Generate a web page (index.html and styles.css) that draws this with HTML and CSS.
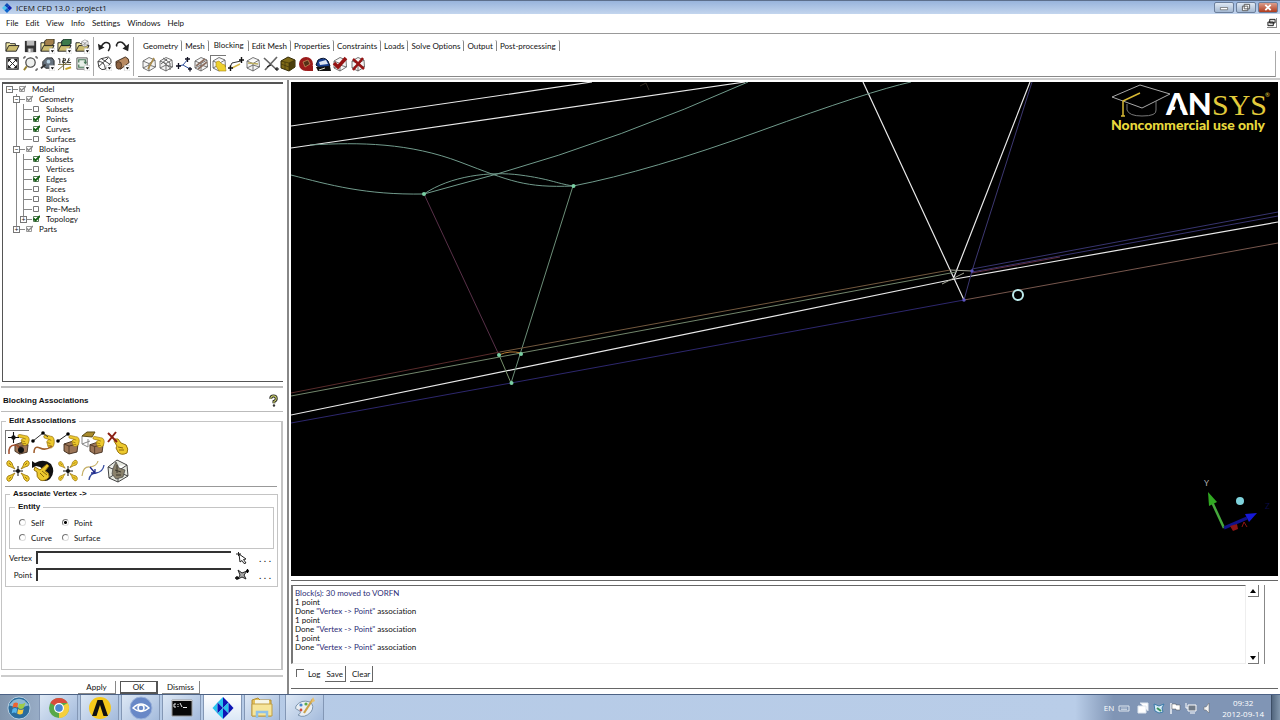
FILE: index.html
```
<!DOCTYPE html>
<html lang="en">
<head>
    <meta charset="UTF-8">
    <meta name="viewport" content="width=device-width, initial-scale=1.0">
    <title>ICEM CFD 13.0 : project1</title>
    <link rel="stylesheet" href="styles.css">
</head>
<body>
    <!-- shared shapes -->
    <svg class="defs" aria-hidden="true">
        <symbol id="wirecube" viewBox="0 0 16 16">
            <path d="M2 5L8 1.500 14 4 14.500 11 8 15 2 12ZM2 5L8 7.500 14 4M8 7.500V15M2 12L8 9 14.500 11" fill="#f4f4f4" stroke="#555" stroke-width=".8"/>
        </symbol>
        <symbol id="folder" viewBox="0 0 16 16">
            <path d="M1 13V4H5L6 5H11V7" fill="#f3eaa5" stroke="#222"/>
            <path d="M1 13L4 7H15L12 13Z" fill="#cdbd70" stroke="#222"/>
        </symbol>
        <symbol id="drop" viewBox="0 0 16 16">
            <path d="M10 10H16V16H10Z" fill="#fff" stroke="#bbb" stroke-width=".5"/>
            <path d="M11.500 12H15L13.200 14.500Z" fill="#000"/>
        </symbol>
        <symbol id="hand" viewBox="0 0 16 16" preserveAspectRatio="none">
            <path d="M1 3Q2 1 5 2L10 3Q15 3 15 8Q15 13 11 14Q7 15 6 11L5 8 8 6 3 5Q1 5 1 3Z" fill="#edc92d" stroke="#97720d" stroke-width=".8"/>
            <path d="M8 6L11 7M6 9L10 10M7 12L11 12" fill="none" stroke="#8a680c" stroke-width=".8"/>
        </symbol>
        <symbol id="solid" viewBox="0 0 16 16">
            <path d="M1 5L10 2 15 5 14 13 6 15 1 12Z" fill="#9c7658" stroke="#3b2819" stroke-width=".9"/>
            <path d="M1 5L6 7 15 5M6 7V15" fill="none" stroke="#4b3423" stroke-width=".9"/>
        </symbol>
        <symbol id="finger" viewBox="0 0 10 10">
            <path d="M1 2Q2 0 4 1L6 3 7 6 9 9 5 7 2 6Q0 4 1 2Z" fill="#edc92d" stroke="#97720d" stroke-width=".8"/>
            <path d="M3 3L5 5" stroke="#8a680c" stroke-width=".8"/>
        </symbol>
        <symbol id="star" viewBox="0 0 10 10">
            <path d="M5 0V10M0 5H10" stroke="#111" stroke-width="1"/><circle cx="5" cy="5" r="2" fill="#111"/>
        </symbol>
    </svg>

    <header class="titlebar">
        <svg class="app-icon" viewBox="0 0 16 16"><path d="M8 0L12 4 8 8 4 4Z" fill="#0b49b5"/><path d="M4 4L8 8 4 12 0 8Z" fill="#4cc4ef"/><path d="M12 4L16 8 12 12 8 8Z" fill="#1020b0"/><path d="M8 8L12 12 8 16 4 12Z" fill="#0d64cb"/></svg>
        <span class="title">ICEM CFD 13.0 : project1</span>
        <div class="window-buttons">
            <button aria-label="Minimize"><svg viewBox="0 0 20 10"><path d="M6 5H14V7.500H6Z" fill="#fff" stroke="#555" stroke-width=".7"/></svg></button>
            <button aria-label="Restore"><svg viewBox="0 0 20 10"><path d="M8 1.500H14V6.500H8ZM6 3.500H12V8.500H6Z" fill="#fff" stroke="#555"/></svg></button>
            <button class="close" aria-label="Close"><svg viewBox="0 0 20 10"><path d="M7 2L13 8M13 2L7 8" stroke="#fff" stroke-width="2"/></svg></button>
        </div>
    </header>

    <nav class="menubar">
        <button>File</button><button>Edit</button><button>View</button><button>Info</button><button>Settings</button><button>Windows</button><button>Help</button>
        <button class="undock" aria-label="Restore child window"><svg viewBox="0 0 10 10"><path d="M3 1.500H9V5.500H3ZM1 4.500H7V8.500H1Z" fill="#ddd" stroke="#111"/></svg></button>
    </nav>

    <section class="toolbar">
        <div class="tools file-tools">
            <button aria-label="Open project"><svg viewBox="0 0 16 16"><use href="#folder"/></svg></button>
            <button aria-label="Save project"><svg viewBox="0 0 16 16"><path d="M2 2H14V14H2Z" fill="#333"/><path d="M4 2H12V7H4Z" fill="#bbb"/><path d="M5 10H11V14H5Z" fill="#999"/><path d="M6 10.500H8V14H6Z" fill="#eee"/></svg></button>
            <button aria-label="Open geometry"><svg viewBox="0 0 16 16"><use href="#folder"/><path d="M5 2L8 0H15V5L12 7H5Z" fill="#a3804c" stroke="#332"/><use href="#drop"/></svg></button>
            <button aria-label="Open mesh"><svg viewBox="0 0 16 16"><use href="#folder"/><path d="M5 2L8 0H15V5L12 7H5Z" fill="#3d7a4b" stroke="#122"/><use href="#drop"/></svg></button>
            <button aria-label="Open blocking"><svg viewBox="0 0 16 16"><use href="#folder"/><use href="#wirecube" x="6" y="0" width="9" height="9"/><use href="#drop"/></svg></button>
            <button aria-label="Fit window"><svg viewBox="0 0 16 16"><path d="M2 2H14V14H2Z" fill="#fff" stroke="#222" stroke-width="1.300"/><path d="M4 4L12 12M12 4L4 12" stroke="#222"/><path d="M3 3H7L3 7ZM13 3V7L9 3ZM3 13V9L7 13ZM13 13H9L13 9Z" fill="#222"/></svg></button>
            <button aria-label="Box zoom"><svg viewBox="0 0 16 16"><circle cx="8" cy="7" r="5" fill="#eef0ee" stroke="#444" stroke-width="1.300"/><path d="M4 11L1 15" stroke="#96802e" stroke-width="2"/><path d="M1 1H3M1 1V3M15 1H13M15 1V3M15 15H13M15 15V13" stroke="#222"/></svg></button>
            <button aria-label="Measure"><svg viewBox="0 0 16 16"><path d="M3 6L7 2H13L15 5V13H6L3 10Z" fill="#66727e" stroke="#222"/><path d="M1 13L6 9" stroke="#333" stroke-width="2"/><circle cx="9" cy="6" r="2" fill="#b8d2e2"/><use href="#drop"/></svg></button>
            <button aria-label="Local coordinate system"><svg viewBox="0 0 16 16"><path d="M1 15L14 4M7 2V15M1 9H15" stroke="#716538"/><path d="M1 3H3V8M6 3H9V5H6V7H9M13 2L11 7H15" stroke="#222" fill="none"/><path d="M9 14L15 12" stroke="#c9a323" stroke-width="2"/></svg></button>
            <button aria-label="Refresh"><svg viewBox="0 0 16 16"><path d="M2 2H13V14H2Z" fill="#e8efe8" stroke="#555"/><path d="M4 7V4H11V7M4 9V12H10" fill="none" stroke="#477858" stroke-width="1.300"/><path d="M9 6H13L11 9Z" fill="#477858"/><use href="#drop"/></svg></button>
        </div>
        <div class="tools edit-tools">
            <button aria-label="Undo"><svg viewBox="0 0 16 16"><path d="M4 9Q8 1 13 5Q15 8 12 13" fill="none" stroke="#222" stroke-width="1.600"/><path d="M1 5L2 12 8 9Z" fill="#222"/></svg></button>
            <button aria-label="Redo"><svg viewBox="0 0 16 16"><path d="M12 9Q8 1 3 4Q1 6 2 8" fill="none" stroke="#222" stroke-width="1.600"/><path d="M15 5L14 13 8 10Z" fill="#222"/></svg></button>
            <button aria-label="Wire frame"><svg viewBox="0 0 16 16"><path d="M1 6Q3 2 8 2L12 1Q16 3 15 7L9 14Q5 16 2 12ZM1 6Q8 5 9 14M5 3L14 9M2 11L12 2" fill="#fff" stroke="#333"/><use href="#drop"/></svg></button>
            <button aria-label="Solid"><svg viewBox="0 0 16 16"><path d="M1 6L11 1Q15 2 15 7L6 14Q1 13 1 6Z" fill="#b98b62" stroke="#3b2819"/><ellipse cx="4" cy="10" rx="3" ry="4" fill="#8d6241" stroke="#3b2819" stroke-width=".8"/><use href="#drop"/></svg></button>
        </div>
        <div class="ribbon">
            <div class="tabs" role="tablist">
                <button role="tab">Geometry</button><button role="tab">Mesh</button><button role="tab" class="active" aria-selected="true">Blocking</button><button role="tab">Edit Mesh</button><button role="tab">Properties</button><button role="tab">Constraints</button><button role="tab">Loads</button><button role="tab">Solve Options</button><button role="tab">Output</button><button role="tab">Post-processing</button>
            </div>
            <div class="ribbon-page">
                <div class="block-tools">
                    <button aria-label="Create block"><svg viewBox="0 0 16 16"><use href="#wirecube"/><path d="M7 13L13 2" stroke="#a98b4b" stroke-width="1.600"/></svg></button>
                    <button aria-label="Split block"><svg viewBox="0 0 16 16"><use href="#wirecube"/><path d="M5 2L12 7V14M5 6L11 11M3 8L9 3" fill="none" stroke="#666"/></svg></button>
                    <button aria-label="Merge vertices"><svg viewBox="0 0 16 16"><path d="M2 10L7 9 12 3M7 9L14 13" fill="none" stroke="#2b4d9b"/><path d="M0 10H5M2.500 7V13M9 3H14M11.500 1V6M12 13H16M14 11V15.500" stroke="#112"  stroke-width="1.300"/></svg></button>
                    <button aria-label="Edit block"><svg viewBox="0 0 16 16"><use href="#wirecube"/><path d="M3 10L12 3M5 13L14 6" stroke="#8a6f61" stroke-width="1.600"/></svg></button>
                    <button class="pressed" aria-label="Associate" aria-pressed="true"><svg viewBox="0 0 16 16"><use href="#wirecube"/><path d="M5 6L8 5 11 8 14 9 15 15H8L5 10Z" fill="#edd02d" stroke="#a98612" stroke-width=".6"/></svg></button>
                    <button aria-label="Move vertex"><svg viewBox="0 0 16 16"><path d="M2 11L4 7 13 5" fill="none" stroke="#333"/><path d="M4 12L12 8" stroke="#d6b847" stroke-width="1.500"/><path d="M0 12H5M2.500 9.500V15M11 4H16M13.500 1V7" stroke="#111" stroke-width="1.400"/></svg></button>
                    <button aria-label="Transform blocks"><svg viewBox="0 0 16 16"><use href="#wirecube"/><path d="M3 7L13 8" stroke="#bcae61" stroke-width="1.500"/></svg></button>
                    <button aria-label="Edit edge"><svg viewBox="0 0 16 16"><path d="M1 2L14 14M14 1L2 14" stroke="#666" stroke-width="1.700"/><path d="M4 11L8 9M12 13H16M14 11V15" stroke="#111"/></svg></button>
                    <button aria-label="Pre-mesh parameters"><svg viewBox="0 0 16 16"><path d="M1 5L8 1 15 4V11L9 15 1 12Z" fill="#7e6917" stroke="#322b08"/><path d="M9 7L15 4V11L9 15Z" fill="#4b3e0c"/><path d="M1 5L9 7 15 4M9 7V15M1 8L9 11M5 6V13" fill="none" stroke="#352c06" stroke-width=".6"/></svg></button>
                    <button aria-label="Pre-mesh quality"><svg viewBox="0 0 16 16"><circle cx="8" cy="8" r="7" fill="#9b1b1b"/><path d="M10 10H15V15H9Z" fill="#9b1b1b"/><path d="M5 6L10 4 12 8 7 11Z" fill="#553017" stroke="#c28c58" stroke-width=".8"/></svg></button>
                    <button aria-label="Smooth mesh"><svg viewBox="0 0 16 16"><path d="M1 9L3 4Q9 0 13 5L15 10 5 12Z" fill="#173d8c" stroke="#08142c"/><path d="M4 6L11 4 13 8 5 9Z" fill="#dbe4f2"/><path d="M1 11L15 10 16 15H3Z" fill="#111"/><path d="M4 14L10 12" stroke="#ddc" /></svg></button>
                    <button aria-label="Check blocks"><svg viewBox="0 0 16 16"><use href="#wirecube"/><path d="M2 7L6 11 14 2" fill="none" stroke="#951313" stroke-width="3.500"/></svg></button>
                    <button aria-label="Delete blocks"><svg viewBox="0 0 16 16"><use href="#wirecube"/><path d="M3 3L14 13M13 2L3 14" stroke="#951313" stroke-width="2.500"/></svg></button>
                </div>
            </div>
        </div>
    </section>

    <main class="workspace">
        <aside class="sidebar">
            <ul class="tree">
                <li>
                    <div class="row"><button class="twist" aria-label="Collapse">−</button><label><input type="checkbox" class="partial" checked>Model</label></div>
                    <ul>
                        <li>
                            <div class="row"><button class="twist" aria-label="Collapse">−</button><label><input type="checkbox" class="partial" checked>Geometry</label></div>
                            <ul>
                                <li><div class="row"><label><input type="checkbox">Subsets</label></div></li>
                                <li><div class="row"><label><input type="checkbox" checked>Points</label></div></li>
                                <li><div class="row"><label><input type="checkbox" checked>Curves</label></div></li>
                                <li><div class="row"><label><input type="checkbox">Surfaces</label></div></li>
                            </ul>
                        </li>
                        <li>
                            <div class="row"><button class="twist" aria-label="Collapse">−</button><label><input type="checkbox" class="partial" checked>Blocking</label></div>
                            <ul>
                                <li><div class="row"><label><input type="checkbox" checked>Subsets</label></div></li>
                                <li><div class="row"><label><input type="checkbox">Vertices</label></div></li>
                                <li><div class="row"><label><input type="checkbox" checked>Edges</label></div></li>
                                <li><div class="row"><label><input type="checkbox">Faces</label></div></li>
                                <li><div class="row"><label><input type="checkbox">Blocks</label></div></li>
                                <li><div class="row"><label><input type="checkbox">Pre-Mesh</label></div></li>
                                <li><div class="row"><button class="twist" aria-label="Expand">+</button><label><input type="checkbox" checked>Topology</label></div></li>
                            </ul>
                        </li>
                        <li><div class="row"><button class="twist" aria-label="Expand">+</button><label><input type="checkbox" class="partial" checked>Parts</label></div></li>
                    </ul>
                </li>
            </ul>

            <div class="panel-title">
                <h2>Blocking Associations</h2>
                <button aria-label="Help"><svg viewBox="0 0 12 14"><path d="M3 5Q3 2 6 2Q9 2 9 5Q9 7 6.500 8V10" fill="none" stroke="#222" stroke-width="3.200"/><path d="M3 5Q3 2 6 2Q9 2 9 5Q9 7 6.500 8V10" fill="none" stroke="#cbd06a" stroke-width="1.200"/><circle cx="6.500" cy="12.500" r="1.300" fill="#333"/></svg></button>
            </div>

            <fieldset class="panel">
                <legend>Edit Associations</legend>
                <div class="assoc-tools">
                    <button class="pressed" aria-label="Associate vertex" aria-pressed="true"><svg viewBox="0 0 24 24"><use href="#solid" x="8" y="9" width="15" height="15"/><use href="#hand" x="11" y="2" width="13" height="14"/><use href="#star" x="2" y="1" width="11" height="11"/><path d="M3 23Q2 14 9 14Q13 14 14 20" fill="none" stroke="#a3502f" stroke-width="1.500"/><circle cx="15" cy="19" r="3" fill="#111"/></svg></button>
                    <button aria-label="Associate edge to curve"><svg viewBox="0 0 24 24"><use href="#hand" x="12" y="2" width="12" height="17"/><path d="M2 10L12 2 17 6" fill="none" stroke="#333"/><path d="M3 22Q3 14 9 17T21 15" fill="none" stroke="#a1602f" stroke-width="1.500"/><circle cx="2" cy="10" r="1.800"/><circle cx="12" cy="2" r="1.800"/></svg></button>
                    <button aria-label="Associate edge to surface"><svg viewBox="0 0 24 24"><use href="#solid" x="7" y="8" width="16" height="16"/><use href="#hand" x="12" y="3" width="12" height="14"/><path d="M2 10L12 3" stroke="#222"/><circle cx="2" cy="10" r="1.800"/><circle cx="12" cy="3" r="1.800"/></svg></button>
                    <button aria-label="Associate face to surface"><svg viewBox="0 0 24 24"><path d="M1 5V13L7 16V8M1 13L9 10" fill="none" stroke="#888"/><use href="#solid" x="8" y="9" width="15" height="15"/><use href="#hand" x="11" y="4" width="13" height="14"/><path d="M1 5L6 1H14L11 6Z" fill="#a88a2b" stroke="#5b4b16"/></svg></button>
                    <button aria-label="Disassociate"><svg viewBox="0 0 24 24"><path d="M9 8L12 8 15 12 20 14Q23 18 21 22Q15 25 12 21L10 17 11 15 8 10Z" fill="#edc92d" stroke="#97720d"/><path d="M12 16L17 17M13 19L18 19" stroke="#8a680c"/><path d="M2 2L11 11M10 1L2 11" stroke="#8a1f14" stroke-width="2"/></svg></button>
                    <button aria-label="Update associations"><svg viewBox="0 0 24 24"><use href="#finger" x="0" y="1" width="10" height="10"/><use href="#finger" x="0" y="1" width="10" height="10" transform="matrix(-1 0 0 1 24 0)"/><use href="#finger" x="0" y="1" width="10" height="10" transform="matrix(1 0 0 -1 0 24)"/><use href="#finger" x="0" y="1" width="10" height="10" transform="matrix(-1 0 0 -1 24 24)"/><use href="#star" x="7" y="7" width="10" height="10"/></svg></button>
                    <button aria-label="Reset association"><svg viewBox="0 0 24 24"><path d="M1 9V2L4 4Q13 -1 20 5Q25 13 19 20Q14 24 9 20L17 14 9 8 5 7Z" fill="#111"/><path d="M4 8L9 11 16 5 18 7 14 12Q19 14 18 18Q14 23 9 21Q5 18 6 13L3 11Z" fill="#edc92d" stroke="#97720d"/><path d="M9 14L13 18M11 12L16 16" stroke="#8a680c"/></svg></button>
                    <button aria-label="Snap project vertices"><svg viewBox="0 0 24 24"><use href="#finger" x="2" y="1" width="8" height="10"/><use href="#finger" x="2" y="0" width="9" height="10" transform="matrix(-1 0 0 1 24 0)"/><use href="#finger" x="2" y="1" width="8" height="10" transform="matrix(1 0 0 -1 0 24)"/><use href="#finger" x="2" y="1" width="9" height="10" transform="matrix(-1 0 0 -1 24 24)"/><use href="#star" x="7" y="7" width="10" height="10"/></svg></button>
                    <button aria-label="Group curves"><svg viewBox="0 0 24 24"><path d="M1 17Q2 7 9 8Q16 7 17 2" fill="none" stroke="#c5af65" stroke-width="1.200"/><path d="M8 21Q9 14 15 14Q22 13 23 6" fill="none" stroke="#354ca0" stroke-width="1.300"/><path d="M9 8L14 14M14 10V14H10" fill="none" stroke="#202a8c" stroke-width="1.300"/></svg></button>
                    <button aria-label="Auto associate"><svg viewBox="0 0 24 24"><path d="M2 8L11 1 21 6 22 17 12 23 3 19ZM2 8L12 12 21 6M12 12V23M3 19L12 13 22 17" fill="#e6e9e0" stroke="#444"/><path d="M7 9L10 3 13 9 19 11 17 18 10 20 6 15Z" fill="#89816b" stroke="#444" stroke-width=".7"/><path d="M9 11L15 13M10 16L15 16M11 6V14" stroke="#3a372d"/></svg></button>
                </div>

                <fieldset class="group">
                    <legend>Associate Vertex -&gt;</legend>
                    <fieldset class="entity">
                        <legend>Entity</legend>
                        <label><input type="radio" name="entity">Self</label>
                        <label><input type="radio" name="entity" checked>Point</label>
                        <label><input type="radio" name="entity">Curve</label>
                        <label><input type="radio" name="entity">Surface</label>
                    </fieldset>
                    <div class="field">
                        <label for="vertex">Vertex</label>
                        <input type="text" id="vertex">
                        <button aria-label="Select vertex"><svg viewBox="0 0 14 12"><path d="M4 2L11 7 8.500 7.500 11 11 9 11.500 7 8.500 5 10Z" fill="#fff" stroke="#222"/><path d="M1 2H6M3.500 0V4" stroke="#222"/></svg></button>
                        <button class="more">. . .</button>
                    </div>
                    <div class="field">
                        <label for="point">Point</label>
                        <input type="text" id="point">
                        <button aria-label="Select point"><svg viewBox="0 0 14 12"><path d="M3 1L7 4 12 2 9 6 11 10 7 8 3 10 5 6Z" fill="#aaa" stroke="#222"/><path d="M0 9H4M2 7V11M11 2H14M12.500 0V4" stroke="#000" stroke-width="1.300"/></svg></button>
                        <button class="more">. . .</button>
                    </div>
                </fieldset>
            </fieldset>

            <div class="actions">
                <button>Apply</button><button class="default">OK</button><button>Dismiss</button>
            </div>
        </aside>

        <section class="content">
            <svg class="viewport" viewBox="291 82 987 494" preserveAspectRatio="xMinYMin slice">
                <!-- edges -->
                <g fill="none" stroke="#e9e9e9" stroke-width="1.200">
                    <path d="M291 126L592 82M291 148L745 82"/>
                    <path d="M291 415L955 279L1278 222"/>
                    <path d="M863 82L964 300M1030 82L954 277"/>
                </g>
                <!-- curves -->
                <g fill="none" stroke="#719b8c">
                    <path d="M291 175C330 185 365 195 424 194C450 176 490 171 520 175S555 183 573 186"/>
                    <path d="M310 145C360 142 410 143 460 162S525 188 573 186"/>
                    <path d="M424 194L497 174Q620 139 748 82"/>
                    <path d="M573 186Q650 171 760 131T911 82"/>
                    <path d="M573 186L511 383" stroke="#6c8e78"/>
                </g>
                <g fill="none">
                    <path d="M424 194L499 355" stroke="#583048"/>
                    <path d="M499 355L511 383" stroke="#77916c"/>
                    <path d="M291 393L500 352" stroke="#592b2b"/>
                    <path d="M500 352L950 270" stroke="#72583e"/>
                    <path d="M291 396L521 353L956 272" stroke="#72866c"/>
                    <path d="M499 355Q510 350 521 353" stroke="#b87d36"/>
                    <path d="M291 423L511 383L964 300" stroke="#2d276d"/>
                    <path d="M964 300L1278 243" stroke="#77574d"/>
                    <path d="M972 269L1278 212M972 272L1278 216" stroke="#37346f"/>
                    <path d="M972 273L1060 257" stroke="#613046"/>
                    <path d="M1032 82L972 271L964 300" stroke="#3d3872"/>
                    <path d="M942 284L964 273M950 270L972 271" stroke="#a4a798"/>
                    <path d="M640 86L646 83L649 90" stroke="#332b21"/>
                </g>
                <g fill="#79cfa3">
                    <circle cx="424" cy="194" r="2"/><circle cx="573.500" cy="186" r="2"/><circle cx="499" cy="355" r="2"/><circle cx="521" cy="354" r="2"/><circle cx="511.500" cy="383" r="2"/>
                </g>
                <circle cx="972" cy="271" r="1.700" fill="#5d55c2"/><circle cx="964" cy="300" r="1.700" fill="#5d55c2"/>
                <circle cx="1018" cy="295" r="5" fill="none" stroke="#bdebec" stroke-width="2"/>

                <!-- ANSYS logo -->
                <g fill="none">
                    <path d="M1112 97L1140 85L1170 94L1142 108Z" stroke="#a9a9a9"/>
                    <path d="M1127 104V110Q1129 116 1142 116Q1157 116 1156 110V101" stroke="#777"/>
                    <path d="M1140 93L1123 101V116M1121 116H1125" stroke="#d8b934" stroke-width="1.500"/>
                </g>
                <text class="logo-an" x="1166" y="115">AN</text>
                <path d="M1173 116L1177.500 99L1182.500 116Z" fill="#000"/>
                <text class="logo-sys" x="1212" y="115">SYS</text>
                <text class="logo-r" x="1265" y="97">®</text>
                <text class="logo-note" x="1265" y="130">Noncommercial use only</text>

                <!-- axis triad -->
                <path d="M1224 528L1212 502" stroke="#46a83c" stroke-width="2.500"/>
                <path d="M1208 492L1217 502L1209 506Z" fill="#31a922"/>
                <path d="M1224 528L1247 518" stroke="#11118a" stroke-width="3"/>
                <path d="M1257 513L1249 522L1245 514Z" fill="#1619d8"/>
                <path d="M1230 526L1237 524L1238 529L1233 531Z" fill="#8d1515"/>
                <path d="M1242 527L1244 522L1247 527" stroke="#8d1515" fill="none"/>
                <circle cx="1240" cy="501" r="4" fill="#7fd3dc"/>
                <text class="axis" x="1204" y="486">Y</text>
                <text class="axis axis-z" x="1265" y="509">Z</text>
            </svg>

            <div class="console">
                <div class="log-area">
                    <div class="messages" role="log">
                        <p><em>Block(s): 30 moved to VORFN</em></p>
                        <p>1 point</p>
                        <p>Done <em>"Vertex -&gt; Point"</em> association</p>
                        <p>1 point</p>
                        <p>Done <em>"Vertex -&gt; Point"</em> association</p>
                        <p>1 point</p>
                        <p>Done <em>"Vertex -&gt; Point"</em> association</p>
                    </div>
                    <div class="scroller">
                        <button aria-label="Scroll up"><svg viewBox="0 0 6 4"><path d="M0 4L3 0 6 4Z"/></svg></button>
                        <button aria-label="Scroll down"><svg viewBox="0 0 6 4"><path d="M0 0L3 4 6 0Z"/></svg></button>
                    </div>
                </div>
                <div class="log-controls">
                    <label><input type="checkbox">Log</label>
                    <button>Save</button>
                    <button>Clear</button>
                </div>
            </div>
        </section>
    </main>

    <footer class="taskbar">
        <button class="start" aria-label="Start"><svg viewBox="0 0 26 26"><circle cx="13" cy="13" r="12" fill="#2a6c9d" stroke="#bfd6e6"/><path d="M2 10Q13 -4 24 10Q13 14 2 10Z" fill="#8eb9d4"/><path d="M7 8Q10 6 12 8L11 13Q9 11 6 13Z" fill="#ee6430"/><path d="M13 8Q16 10 20 7L18 13Q15 15 12 13Z" fill="#9dcc47"/><path d="M6 14Q9 12 11 14L10 19Q8 17 5 19Z" fill="#55b4ec"/><path d="M12 14Q15 16 18 14L17 19Q14 21 11 19Z" fill="#f9cb3e"/></svg></button>
        <button class="task" aria-label="Chrome"><svg viewBox="0 0 24 24"><circle cx="12" cy="12" r="10" fill="#58a849"/><path d="M12 12L3.300 7A10 10 0 0 1 20.700 7H12Z" fill="#d94b3c"/><path d="M12 12L20.700 7A10 10 0 0 1 12 22Z" fill="#f5cf3c"/><circle cx="12" cy="12" r="5" fill="#fff"/><circle cx="12" cy="12" r="3.800" fill="#4a86d0"/></svg></button>
        <button class="task" aria-label="ANSYS Workbench"><svg viewBox="0 0 24 24"><circle cx="12" cy="12" r="11" fill="#f6c91b"/><path d="M4 20L9.500 4H14.500L20 20H15.500L12 9 8.500 20Z" fill="#111"/></svg></button>
        <button class="task" aria-label="Viewer"><svg viewBox="0 0 24 24"><circle cx="12" cy="12" r="11" fill="#6888c7" stroke="#9bb2da"/><path d="M4 12Q12 4 20 12Q12 19 4 12Z" fill="none" stroke="#fff" stroke-width="1.400"/><circle cx="12" cy="12" r="3" fill="none" stroke="#fff" stroke-width="1.500"/></svg></button>
        <button class="task" aria-label="Command prompt"><svg viewBox="0 0 24 24"><path d="M2 4H22V20H2Z" fill="#080808" stroke="#9a9a9a"/><path d="M2 4.500H22" stroke="#ccc"/><path d="M6 8H4V11H6M8 8V9M8 10V11M10 7L12 11M13 11.500H17" stroke="#eee" fill="none"/></svg></button>
        <button class="task current" aria-label="ICEM CFD"><svg viewBox="0 0 24 24"><path d="M12 1L6.500 6.500 12 12Z" fill="#27c3ee"/><path d="M12 1L17.500 6.500 12 12Z" fill="#0d14b4"/><path d="M6.500 6.500L1.500 12 6.500 17.500Z" fill="#27c3ee"/><path d="M6.500 6.500L12 12 6.500 17.500Z" fill="#0d14b4"/><path d="M17.500 6.500L12 12 17.500 17.500Z" fill="#27c3ee"/><path d="M17.500 6.500L22.500 12 17.500 17.500Z" fill="#0d14b4"/><path d="M12 12V23L6.500 17.500Z" fill="#27c3ee"/><path d="M12 12L17.500 17.500 12 23Z" fill="#0d14b4"/></svg></button>
        <button class="task folder" aria-label="Explorer"><svg viewBox="0 0 24 24"><path d="M2 4L8 2 10 4H21V20H2Z" fill="#e5c15b" stroke="#b08d34"/><path d="M5 4H19V10H5Z" fill="#f6f6e8"/><path d="M2 8H22V20H2Z" fill="#f6e59a" stroke="#bf9d44"/><path d="M7 22V16H17V22" fill="none" stroke="#8fc1e8" stroke-width="2.500"/></svg></button>
        <button class="task" aria-label="Paint"><svg viewBox="0 0 24 24"><path d="M3 10Q8 3 17 6Q22 10 18 16Q11 23 5 19Q10 16 5 14Q1 13 3 10Z" fill="#e9eef3" stroke="#7d95ae"/><circle cx="8" cy="9" r="1.600" fill="#4a86d0"/><circle cx="13" cy="8" r="1.600" fill="#5aa94a"/><circle cx="8" cy="14" r="1.400" fill="#d04a3c"/><path d="M20 3L11 17" stroke="#cda34b" stroke-width="2.200"/><path d="M20 1L22 5 18 7Z" fill="#e7c06b"/></svg></button>
        <div class="tray">
            <span>EN</span>
            <svg viewBox="0 0 12 12"><path d="M1 4H11V9H1Z" fill="none" stroke="#dfe6ee"/><path d="M3 6H9M3 7.500H9" stroke="#dfe6ee" stroke-width=".7"/></svg>
            <svg class="first" viewBox="0 0 12 12"><path d="M1 4H9V11H1ZM3 1H11V9" fill="#fff" stroke="#dfe6ee"/></svg>
            <svg viewBox="0 0 12 12"><path d="M1 2L6 4 11 2 9 6 10 10 6 11 2 9Z" fill="#d7edf7" stroke="#3c7bab"/><path d="M4 6L8 9" stroke="#3e9258" stroke-width="2"/></svg>
            <svg viewBox="0 0 12 12"><path d="M2 1V12" stroke="#fff" stroke-width="1.300"/><path d="M3 2H7V3H11V8H7V7H3Z" fill="#fff" stroke="#555" stroke-width=".5"/></svg>
            <svg viewBox="0 0 12 12"><path d="M3 3H11V9H3Z" fill="#707b88" stroke="#fff"/><path d="M5 11H10M1 1V6H3" stroke="#fff" fill="none"/></svg>
            <svg viewBox="0 0 12 12"><path d="M3 5H5L8 1V11L5 8H3Z" fill="#f2f2f2" stroke="#666" stroke-width=".5"/></svg>
            <time class="clock" datetime="2012-09-14T09:32">09:32<br>2012-09-14</time>
            <button class="peek" aria-label="Show desktop"></button>
        </div>
    </footer>
</body>
</html>
```
FILE: styles.css
```
* {
    box-sizing: border-box;
}

body {
    margin: 0;
    height: 100vh;
    display: flex;
    flex-direction: column;
    overflow: hidden;
    background: #fff;
    color: #111;
    font-family: Lato, "Liberation Sans", Arial, sans-serif;
    font-size: 8px;
    font-variant-ligatures: none;
    line-height: 10px;
}

button {
    padding: 0;
    border: 0;
    background: none;
    color: inherit;
    font: inherit;
    font-variant-ligatures: none;
}

button svg {
    display: block;
}

.defs {
    display: none;
}

/* Title bar and menu */
.titlebar {
    display: flex;
    align-items: center;
    flex: none;
    height: 14px;
    padding: 0 2px;
    border-top: 1px solid #5d6f8c;
    background: linear-gradient(#98b4dc, #c3d5ee);
}

.app-icon {
    width: 10px;
    height: 12px;
}

.title {
    margin-left: 4px;
    font-family: "Open Sans", sans-serif;
}

.window-buttons {
    display: flex;
    gap: 2px;
    margin-left: auto;
}

.window-buttons button {
    width: 20px;
    height: 11px;
    border: 1px solid #6c7f9c;
    border-radius: 2px;
    background: linear-gradient(#dfe8f3, #a4b8d2);
}

.window-buttons .close {
    background: linear-gradient(#dc9d8c, #b03c1e);
}

.menubar {
    display: flex;
    align-items: center;
    flex: none;
    gap: 7px;
    height: 20px;
    padding: 0 3px 1px 6px;
    border-bottom: 1px solid #999;
}

.undock {
    width: 10px;
    margin-left: auto;
    border-right: 1px solid #888;
    border-bottom: 1px solid #888;
}

/* Toolbar */
.toolbar {
    display: flex;
    flex: none;
    height: 46px;
    padding-top: 3px;
    border-bottom: 2px solid #ccc;
}

.tools {
    display: grid;
    align-content: center;
    justify-items: center;
    row-gap: 2px;
    height: 39px;
    border-right: 1px solid #aaa;
}

.tools svg {
    width: 15px;
    height: 15px;
}

.file-tools {
    grid-template-columns: repeat(5, 1fr);
    width: 94px;
    padding: 0 2px 4px 4px;
}

.edit-tools {
    grid-template-columns: repeat(2, 1fr);
    width: 40px;
    padding: 0 2px 4px;
}

.ribbon {
    display: flex;
    flex: 1;
    flex-direction: column;
    margin: 0 4px 0 4px;
}

.tabs {
    display: flex;
    padding: 3px 0 0 2px;
}

.tabs button {
    height: 11px;
    padding: 0 3px;
    border-right: 1px solid #888;
    border-top-right-radius: 2px;
}

.tabs .active {
    padding: 0 4px 2px 5px;
}

.ribbon-page {
    height: 26px;
    border-right: 1px solid #aaa;
    border-bottom: 1px solid #888;
}

.block-tools {
    display: flex;
    justify-content: space-between;
    width: 228px;
    padding: 5px 0 0 3px;
}

.block-tools svg {
    width: 16px;
    height: 16px;
}

.pressed {
    box-shadow: -1px -1px 0 #777;
}

/* Sidebar */
.workspace {
    display: flex;
    flex: 1;
    min-height: 0;
}

.sidebar {
    display: flex;
    flex: none;
    flex-direction: column;
    width: 289px;
    padding: 2px 4px 0 1px;
    border-right: 2px solid #888;
}

.tree {
    height: 300px;
    margin: 0 0 4px 1px;
    padding: 0 0 0 3px;
    border: 1px solid #555;
    border-width: 2px 0 1px 1px;
}

.tree ul {
    margin: 0 0 0 7px;
    padding: 0;
}

.tree li {
    display: block;
    list-style: none;
}

.tree ul li {
    background: linear-gradient(#888, #888) 3px 0 / 1px 100% no-repeat;
}

.tree ul li:last-child {
    background-size: 1px 5px;
}

.row {
    display: flex;
    align-items: center;
    height: 10px;
    background: linear-gradient(#888, #888) 3px 5px / 9px 1px no-repeat;
}

.row label {
    display: flex;
    align-items: center;
    gap: 6px;
    margin-left: 12px;
}

.twist {
    width: 7px;
    height: 7px;
    border: 1px solid #777;
    background: #fff;
    font-size: 7px;
    line-height: 5px;
}

.twist + label {
    margin-left: 5px;
}

.tree input {
    appearance: none;
    width: 8px;
    height: 8px;
    margin: 0;
    background: #fff url("data:image/svg+xml,%3Csvg xmlns='http://www.w3.org/2000/svg' viewBox='0 0 8 8'%3E%3Cpath d='M1.500 1.500H6.500V6.500H1.500Z' fill='none' stroke='%23777'/%3E%3C/svg%3E");
}

.tree input:checked {
    background-image: url("data:image/svg+xml,%3Csvg xmlns='http://www.w3.org/2000/svg' viewBox='0 0 8 8'%3E%3Cpath d='M1.500 1.500H6.500V6.500H1.500Z' fill='none' stroke='%23567756'/%3E%3Cpath d='M1.500 3.500L3.500 5.500L8 1' fill='none' stroke='%23136013' stroke-width='1.800'/%3E%3C/svg%3E");
}

.tree .partial:checked {
    background-image: url("data:image/svg+xml,%3Csvg xmlns='http://www.w3.org/2000/svg' viewBox='0 0 8 8'%3E%3Cpath d='M1.500 1.500H6.500V6.500H1.500Z' fill='none' stroke='%23999'/%3E%3Cpath d='M2 3.500L3.500 5.500L8 1' fill='none' stroke='%23888' stroke-width='1.300'/%3E%3C/svg%3E");
}

.panel-title {
    display: flex;
    align-items: center;
    justify-content: space-between;
    height: 26px;
    margin-bottom: 4px;
    padding: 2px 4px 0 2px;
    border-top: 2px solid #bbb;
    border-bottom: 1px solid #bbb;
}

.panel-title h2 {
    margin: 0;
    font-family: "Liberation Sans", Arial, sans-serif;
    font-size: 8px;
}

.panel-title svg {
    width: 11px;
    height: 13px;
}

fieldset {
    min-width: 0;
    margin: 0;
    padding: 0;
    border: 1px solid #c4c4c4;
}

legend {
    margin-left: 4px;
    padding: 0 3px;
    font-family: "Liberation Sans", Arial, sans-serif;
    font-weight: bold;
    line-height: 10px;
}

.panel {
    flex: 1;
    margin-bottom: 5px;
    border-right-width: 2px;
}

.assoc-tools {
    display: grid;
    grid-template-columns: repeat(5, 24px);
    gap: 4px 1px;
    margin: 5px 4px 0 3px;
    padding: 0 0 3px 1px;
    border-bottom: 1px solid #999;
}

.assoc-tools svg {
    width: 24px;
    height: 24px;
}

.group {
    margin: 2px 3px 0;
    padding-bottom: 3px;
}

.entity {
    display: grid;
    grid-template-columns: 43px 1fr;
    margin: 3px 3px 0;
    padding: 3px 0 3px 9px;
}

.entity label {
    display: flex;
    align-items: center;
    gap: 5px;
    height: 15px;
}

.entity legend {
    margin-left: -4px;
}

.entity input {
    appearance: none;
    width: 7px;
    height: 7px;
    margin: 0;
    border: 1px solid #777;
    border-right-color: #ddd;
    border-bottom-color: #ddd;
    border-radius: 50%;
}

.entity input:checked {
    background: radial-gradient(#000 1px, #fff 2px);
}

.field {
    display: flex;
    align-items: center;
    gap: 4px;
    height: 17px;
}

.field label {
    width: 26px;
    text-align: right;
}

.field input {
    flex: 1;
    min-width: 0;
    height: 13px;
    border: 0 solid #333;
    border-width: 2px 0 0 2px;
    outline: 0;
    font: inherit;
}

.field svg {
    width: 14px;
    height: 12px;
}

.field .more {
    width: 24px;
    font-size: 10px;
}

.actions {
    display: flex;
    justify-content: center;
    gap: 4px;
    padding: 4px 6px 0 0;
    border-top: 2px solid #ccc;
}

.actions button {
    width: 38px;
    height: 13px;
    border: 0 solid #888;
    border-width: 0 1px 1px 0;
}

.actions .default {
    border-width: 1px 2px 2px 1px;
    border-color: #555;
}

/* Graphics window and console */
.content {
    display: flex;
    flex: 1;
    flex-direction: column;
    min-width: 0;
    padding: 2px 2px 5px;
}

.viewport {
    flex: 1;
    width: 100%;
    min-height: 0;
    background: #000;
}

.logo-an {
    fill: #fff;
    font: 900 31px Lato, sans-serif;
}

.logo-sys {
    fill: #e2cb3b;
    font: 30px "Liberation Serif", serif;
}

.logo-r {
    fill: #e2cb3b;
    font-size: 6px;
}

.logo-note {
    fill: #e8d93d;
    font: 900 14px Lato, sans-serif;
    text-anchor: end;
}

.axis {
    fill: #bbb;
    font-size: 8px;
}

.axis-z {
    fill: #0a0a45;
}

.console {
    margin-top: 4px;
    padding-top: 4px;
    border-top: 1px solid #666;
    border-bottom: 1px solid #666;
}

.log-area {
    display: flex;
    margin-right: 13px;
    padding-right: 5px;
    border-right: 1px solid #888;
}

.messages {
    flex: 1;
    height: 79px;
    padding: 3px 2px;
    border: 1px solid #eee;
    border-top-color: #666;
    border-left: 2px solid #777;
    line-height: 9px;
}

.messages p {
    margin: 0;
}

.messages em {
    color: #2b2b75;
    font-style: normal;
}

.scroller {
    display: flex;
    flex-direction: column;
    justify-content: space-between;
    margin-left: 2px;
}

.scroller button {
    display: grid;
    place-items: center;
    width: 11px;
    height: 12px;
    border-right: 1px solid #777;
    border-bottom: 1px solid #777;
}

.scroller svg {
    width: 6px;
    height: 4px;
}

.log-controls {
    display: flex;
    align-items: center;
    gap: 4px;
    height: 24px;
    margin-right: 13px;
    padding: 0 0 4px 5px;
}

.log-controls label {
    display: flex;
    gap: 4px;
}

.log-controls input {
    appearance: none;
    width: 8px;
    height: 8px;
    margin: 0;
    border: 0 solid #666;
    border-width: 1px 0 0 1px;
}

.log-controls button {
    height: 16px;
    padding: 0 2px;
    border-right: 1px solid #666;
    border-bottom: 1px solid #666;
}

/* Taskbar */
.taskbar {
    display: flex;
    flex: none;
    gap: 2px;
    height: 26px;
    border-top: 1px solid #4c6285;
    background: linear-gradient(90deg, #8195ad, #b5cae6 90px, #b9cde8 84%, #8095b5 87%);
}

.start {
    width: 37px;
}

.taskbar button svg {
    width: 24px;
    height: 24px;
    margin: auto;
}

.task {
    width: 39px;
    border: 1px solid #8397b5;
    border-width: 0 1px;
    background: linear-gradient(135deg, #dde8f5, #a4bbdc);
}

.taskbar .current {
    background: linear-gradient(#fff, #dbe8f6);
}

.taskbar .folder {
    width: 36px;
    margin-right: 3px;
}

.tray {
    display: flex;
    align-items: center;
    gap: 4px;
    margin-left: auto;
    color: #fff;
    font-family: "Open Sans", sans-serif;
}

.tray svg {
    width: 12px;
    height: 12px;
}

.tray .first {
    margin-left: 3px;
}

.clock {
    margin: 0 3px 0 5px;
    line-height: 11px;
    text-align: center;
}

.peek {
    align-self: stretch;
    width: 9px;
    border-left: 1px solid #3d4f66;
    background: linear-gradient(90deg, #52667e, #8297ad);
}
```
